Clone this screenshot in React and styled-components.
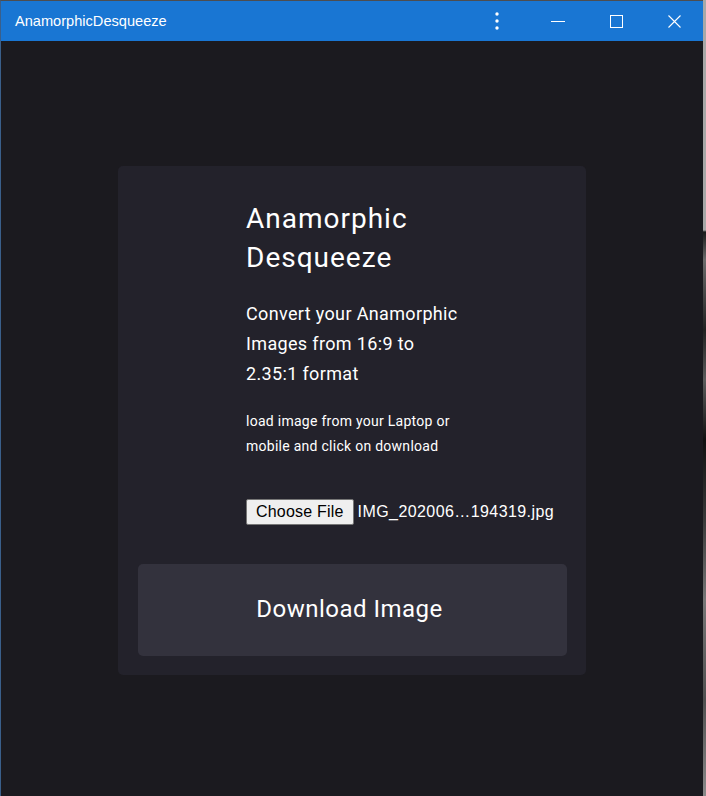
import React from "react";
import styled, { createGlobalStyle } from "styled-components";

const Global = createGlobalStyle`
  html, body { margin: 0; padding: 0; }
  body {
    width: 706px;
    height: 796px;
    overflow: hidden;
    background: #9a9a9a;
    font-family: Roboto, "Liberation Sans", sans-serif;
  }
  #root { height: 100%; }
`;

const Desktop = styled.div`
  display: flex;
  height: 796px;
  width: 706px;
`;

const Window = styled.div`
  width: 702px;
  height: 795px;
  border-top: 1px solid #4d4d4f;
  border-left: 1px solid #3a5f8a;
  display: flex;
  flex-direction: column;
  background: #1b1a1f;
`;

const Backdrop = styled.div`
  flex: 1;
  background: linear-gradient(
    180deg,
    #a8a8a8 0px,
    #a8a8a8 230px,
    #1a1a1a 232px,
    #6b6b6b 260px,
    #222 330px,
    #5c5c5c 380px,
    #111 440px,
    #3a3a3a 520px,
    #777 600px,
    #505050 700px,
    #8a8a8a 796px
  );
`;

const TitleBar = styled.div`
  height: 40px;
  flex: none;
  display: flex;
  align-items: center;
  background: #1976d3;
  color: #ffffff;
`;

const TitleText = styled.div`
  flex: 1;
  padding-left: 14px;
  font-family: "Liberation Sans", Arial, sans-serif;
  font-size: 14.6px;
`;

const CtrlButton = styled.div`
  width: ${(p) => p.$w || 58}px;
  margin-right: ${(p) => p.$mr || 0}px;
  height: 40px;
  display: flex;
  align-items: center;
  justify-content: center;
`;

const Content = styled.main`
  flex: 1;
  display: flex;
  justify-content: center;
  align-items: flex-start;
  padding-top: 125px;
`;

const Card = styled.section`
  width: 468px;
  box-sizing: border-box;
  padding: 33px 19px 19px 20px;
  background: #23222b;
  border-radius: 5px;
  display: flex;
  flex-direction: column;
`;

const Column = styled.div`
  width: 222px;
  margin: 0 auto 0 108px;
  color: #ffffff;
  display: flex;
  flex-direction: column;
`;

const Title = styled.h1`
  margin: 0;
  font-size: 28px;
  line-height: 39.2px;
  font-weight: 400;
  letter-spacing: 1px;
`;

const Subtitle = styled.p`
  margin: 22px 0 0;
  font-size: 18px;
  line-height: 30px;
  font-weight: 400;
  letter-spacing: 0.35px;
`;

const Hint = styled.p`
  margin: 20px 0 0;
  font-size: 14px;
  line-height: 25px;
  letter-spacing: 0.27px;
`;

const FileRow = styled.div`
  margin-top: 40px;
  display: flex;
  align-items: center;
  white-space: nowrap;
  font-family: "Liberation Sans", Arial, sans-serif;
  font-size: 16px;
`;

const ChooseButton = styled.button`
  height: 26px;
  box-sizing: border-box;
  padding: 0 9px;
  margin: 0 4px 0 0;
  background: #efefef;
  border: 1px solid #767676;
  border-radius: 2px;
  color: #000;
  font-family: "Liberation Sans", Arial, sans-serif;
  font-size: 16px;
  line-height: 24px;
  letter-spacing: 0.2px;
`;

const FileName = styled.span`
  color: #ffffff;
  letter-spacing: 0.42px;
`;

const DownloadButton = styled.button`
  margin-top: 39px;
  height: 92px;
  width: 429px;
  border: none;
  border-radius: 5px;
  background: #33323d;
  color: #ffffff;
  font-family: Roboto, "Liberation Sans", sans-serif;
  font-size: 24px;
  font-weight: 400;
  letter-spacing: 0.5px;
  padding: 0 6px 2px 0;
`;

export default function App() {
  return (
    <>
      <Global />
      <Desktop>
        <Window>
          <TitleBar>
            <TitleText>AnamorphicDesqueeze</TitleText>
            <CtrlButton $w={48} $mr={8}>
              <svg width="6" height="20" viewBox="0 0 6 20">
                <circle cx="3" cy="3" r="1.7" fill="#fff" />
                <circle cx="3" cy="10" r="1.7" fill="#fff" />
                <circle cx="3" cy="17" r="1.7" fill="#fff" />
              </svg>
            </CtrlButton>
            <CtrlButton>
              <svg width="14" height="14" viewBox="0 0 14 14">
                <line x1="0" y1="7.5" x2="14" y2="7.5" stroke="#fff" strokeWidth="1" />
              </svg>
            </CtrlButton>
            <CtrlButton>
              <svg width="13" height="13" viewBox="0 0 13 13">
                <rect x="0.5" y="0.5" width="12" height="12" fill="none" stroke="#fff" strokeWidth="1" />
              </svg>
            </CtrlButton>
            <CtrlButton>
              <svg width="13" height="13" viewBox="0 0 13 13">
                <path d="M0.5 0.5 L12.5 12.5 M12.5 0.5 L0.5 12.5" stroke="#fff" strokeWidth="1.1" />
              </svg>
            </CtrlButton>
          </TitleBar>
          <Content>
            <Card>
              <Column>
                <Title>Anamorphic Desqueeze</Title>
                <Subtitle>Convert your Anamorphic Images from 16:9 to 2.35:1 format</Subtitle>
                <Hint>load image from your Laptop or mobile and click on download</Hint>
                <FileRow>
                  <ChooseButton type="button">Choose File</ChooseButton>
                  <FileName>IMG_202006…194319.jpg</FileName>
                </FileRow>
              </Column>
              <DownloadButton type="button">Download Image</DownloadButton>
            </Card>
          </Content>
        </Window>
        <Backdrop />
      </Desktop>
    </>
  );
}
